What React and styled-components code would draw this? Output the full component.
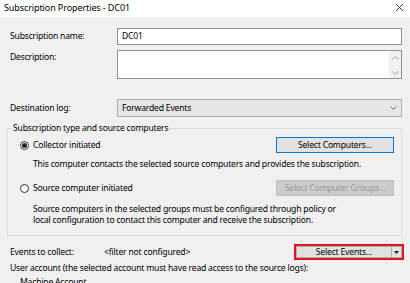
import React from "react";
import styled, { createGlobalStyle } from "styled-components";

const Global = createGlobalStyle`
  html, body { margin: 0; padding: 0; }
  body {
    width: 410px; height: 283px; overflow: hidden;
    font-family: "Noto Sans", "Open Sans", sans-serif;
    font-size: 8.6px; letter-spacing: -0.2px; color: #000; background: #f0f0f0;
  }
  * { box-sizing: border-box; }
`;

const Window = styled.div`
  width: 410px; height: 283px; display: flex; flex-direction: column;
  background: #f0f0f0; overflow: hidden;
`;

const TitleBar = styled.div`
  height: 17px; flex: none; background: #fff;
  display: flex; align-items: center; justify-content: space-between;
  padding: 0 7px 3px 4px;
  line-height: 11px; font-size: 9px; letter-spacing: -0.1px;
`;

const Body = styled.div`
  padding: 11px 8px 0 7px;
  display: flex; flex-direction: column;
`;

const FieldRow = styled.div`
  display: grid; grid-template-columns: 107px 1fr;
  padding-left: 3px; align-items: ${(p) => (p.$top ? "start" : "center")};
  margin-top: ${(p) => p.$mt || 0}px;
`;

const Label = styled.div`
  line-height: 11px;
  padding-top: ${(p) => p.$pt || 0}px;
`;

const TextBox = styled.div`
  height: ${(p) => p.$h}px; background: #fff; border: 1px solid #8f8f8f;
  padding: 0 4px; line-height: 15px; display: flex;
`;

const ScrollBar = styled.div`
  margin-left: auto; width: 12px; margin-right: -4px;
  background: #f0f0f0; display: flex; flex-direction: column;
  justify-content: space-between; align-items: center; padding: 5px 0 3px;
`;

const Combo = styled.div`
  height: 18px; background: #e5e5e5; border: 1px solid #adadad;
  display: flex; align-items: center; justify-content: space-between;
  padding: 0 4px 0 4px; line-height: 11px;
`;

const Group = styled.fieldset`
  margin: 5px 0 0 0; padding: 3px 7px 9px 12px;
  border: 1px solid #dcdcdc; min-width: 0;
`;

const Legend = styled.legend`
  padding: 0 1px; margin-left: -8px; line-height: 12px;
`;

const OptionRow = styled.div`
  display: flex; align-items: center; justify-content: space-between;
  margin-top: ${(p) => p.$mt || 0}px;
`;

const Radio = styled.label`
  display: flex; align-items: center; gap: 4px; line-height: 11px;
`;

const Circle = styled.span`
  width: 9px; height: 9px; border-radius: 50%; border: 1px solid #333;
  background: #fff; display: flex; align-items: center; justify-content: center;
  &::after {
    content: ""; width: 5px; height: 5px; border-radius: 50%;
    background: ${(p) => (p.$on ? "#222" : "transparent")};
  }
`;

const Button = styled.div`
  width: 118px; height: 16px; display: flex; align-items: center; justify-content: center;
  background: ${(p) => (p.$disabled ? "#cccccc" : "#e1e1e1")};
  border: 1px solid ${(p) => (p.$disabled ? "#bfbfbf" : p.$focus ? "#0078d7" : "#adadad")};
  color: ${(p) => (p.$disabled ? "#9b9b9b" : "#000")};
  line-height: 11px;
`;

const Note = styled.div`
  padding-left: 13px; line-height: 11px;
  margin-top: ${(p) => p.$mt || 0}px;
`;

const EventsRow = styled.div`
  display: flex; align-items: center; margin-top: 8px; padding-left: 3px;
`;

const EventsLabel = styled.div`
  width: 94px; line-height: 11px;
`;

const RedOutline = styled.div`
  margin-left: auto; margin-right: -2px; width: 110px; height: 16px;
  border: 2px solid #e81123; display: flex;
`;

const SplitMain = styled.div`
  flex: 1; background: #e1e1e1; border: 1px solid #adadad; border-right: none;
  display: flex; align-items: center; justify-content: center; line-height: 11px;
`;

const SplitArrow = styled.div`
  width: 11px; background: #e1e1e1; border: 1px solid #adadad;
  display: flex; align-items: center; justify-content: center;
`;

const Plain = styled.div`
  line-height: 11px; padding-left: ${(p) => p.$pl || 3}px;
  margin-top: ${(p) => p.$mt || 0}px;
`;

const Chevron = ({ up, color = "#a0a0a0", w = 7 }) => (
  <svg width={w} height="4" viewBox="0 0 7 4">
    <path d={up ? "M0.5 3.5 L3.5 0.5 L6.5 3.5" : "M0.5 0.5 L3.5 3.5 L6.5 0.5"} fill="none" stroke={color} strokeWidth="1" />
  </svg>
);

export default function App() {
  return (
    <Window>
      <Global />
      <TitleBar>
        <span>Subscription Properties - DC01</span>
        <svg width="7" height="7" viewBox="0 0 7 7">
          <path d="M0 0 L7 7 M7 0 L0 7" stroke="#222" strokeWidth="0.9" />
        </svg>
      </TitleBar>
      <Body>
        <FieldRow>
          <Label>Subscription name:</Label>
          <TextBox $h={17}>DC01</TextBox>
        </FieldRow>
        <FieldRow $top $mt={5}>
          <Label $pt={2}>Description:</Label>
          <TextBox $h={29}>
            <ScrollBar>
              <Chevron up />
              <Chevron />
            </ScrollBar>
          </TextBox>
        </FieldRow>
        <FieldRow $mt={20}>
          <Label>Destination log:</Label>
          <Combo>
            <span>Forwarded Events</span>
            <Chevron color="#707070" />
          </Combo>
        </FieldRow>
        <Group>
          <Legend>Subscription type and source computers</Legend>
          <OptionRow>
            <Radio><Circle $on />Collector initiated</Radio>
            <Button $focus>Select Computers...</Button>
          </OptionRow>
          <Note $mt={6}>This computer contacts the selected source computers and provides the subscription.</Note>
          <OptionRow $mt={10}>
            <Radio><Circle />Source computer initiated</Radio>
            <Button $disabled>Select Computer Groups...</Button>
          </OptionRow>
          <Note $mt={8}>
            Source computers in the selected groups must be configured through policy or
            <br />
            local configuration to contact this computer and receive the subscription.
          </Note>
        </Group>
        <EventsRow>
          <EventsLabel>Events to collect:</EventsLabel>
          <span>&lt;filter not configured&gt;</span>
          <RedOutline>
            <SplitMain>Select Events...</SplitMain>
            <SplitArrow>
              <svg width="5" height="3" viewBox="0 0 5 3"><path d="M0 0 L5 0 L2.5 3 Z" fill="#222" /></svg>
            </SplitArrow>
          </RedOutline>
        </EventsRow>
        <Plain $mt={3}>User account (the selected account must have read access to the source logs):</Plain>
        <Plain $pl={13} $mt={3}>Machine Account</Plain>
      </Body>
    </Window>
  );
}
